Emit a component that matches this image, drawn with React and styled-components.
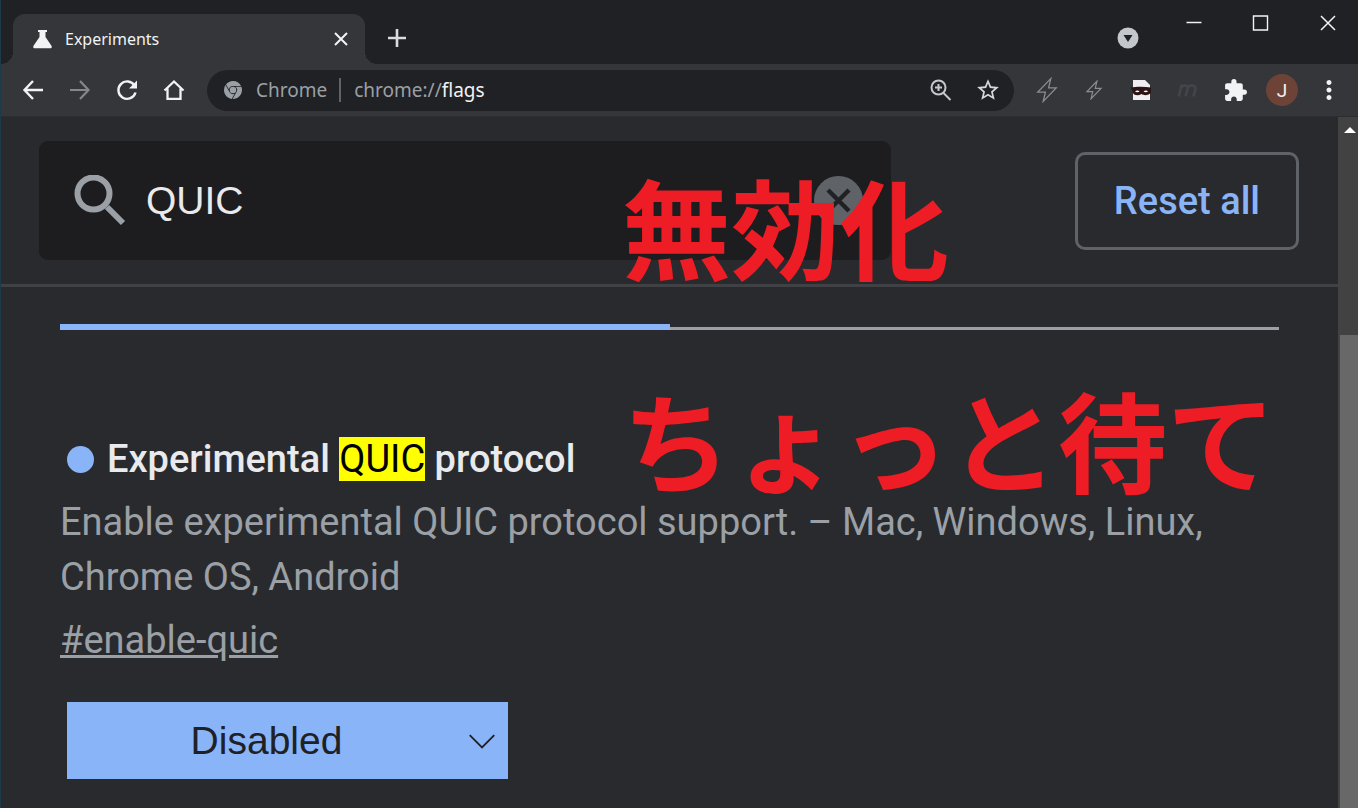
import React from 'react'
import styled, { createGlobalStyle } from 'styled-components'
import { MdExtension, MdMoreVert, MdStarBorder } from 'react-icons/md'
import { SiGooglechrome } from 'react-icons/si'

const GlobalStyle = createGlobalStyle`
    * {
        box-sizing: border-box;
    }
    body {
        margin: 0;
        background: #292a2d;
        font-family: Roboto, sans-serif;
    }
    button {
        font-family: inherit;
        cursor: pointer;
    }
`

const Window = styled.div`
    position: relative;
    display: flex;
    flex-direction: column;
    min-height: 100vh;
    overflow: hidden;
    border-left: 1px solid #1d3a47;
`

const TabStrip = styled.div`
    display: flex;
    height: 64px;
    padding-left: 12px;
    background: #202124;
`

const Tab = styled.div`
    position: relative;
    display: flex;
    align-items: center;
    width: 352px;
    height: 50px;
    margin-top: 14px;
    padding: 0 12px 0 20px;
    border-radius: 12px 12px 0 0;
    background: #35363a;
    color: #f1f3f4;

    &::before,
    &::after {
        content: '';
        position: absolute;
        bottom: 0;
        width: 12px;
        height: 12px;
    }
    &::before {
        right: 100%;
        background: radial-gradient(circle at 0 0, transparent 12px, #35363a 12px);
    }
    &::after {
        left: 100%;
        background: radial-gradient(circle at 100% 0, transparent 12px, #35363a 12px);
    }
`

const TabTitle = styled.span`
    flex: 1;
    margin-left: 13px;
    font: 16px 'Noto Sans', sans-serif;
`

const IconButton = styled.button`
    display: flex;
    flex: none;
    align-items: center;
    justify-content: center;
    width: ${props => props.$width || 42}px;
    height: ${props => props.$height || 42}px;
    padding: 0;
    border: 0;
    background: none;
    color: ${props => props.$color || '#f1f3f4'};
`

const NewTab = styled(IconButton)`
    margin: 17px auto 0 11px;
`

const TabSearch = styled(IconButton)`
    margin: 17px 15px 0 0;
`

const WindowControls = styled.div`
    display: flex;
    gap: 7px;
`

const Toolbar = styled.div`
    display: flex;
    align-items: center;
    gap: 12px;
    height: 53px;
    padding: 0 8px 0 11px;
    background: #35363a;
    border-bottom: 1px solid #2c2d30;
`

const ButtonGroup = styled.div`
    display: flex;
    align-items: center;
    gap: 5px;
`

const Omnibox = styled.div`
    display: flex;
    flex: 1;
    align-items: center;
    height: 41px;
    padding: 0 5px 0 17px;
    border-radius: 21px;
    background: #202124;
    color: #9aa0a6;
    font: 19px 'Noto Sans', sans-serif;
`

const SiteName = styled.span`
    margin-left: 14px;
    padding-right: 12px;
    border-right: 2px solid #5f6368;
    line-height: 24px;
`

const Address = styled.span`
    flex: 1;
    margin-left: 13px;

    b {
        color: #f1f3f4;
        font-weight: 400;
    }
`

const Avatar = styled.span`
    display: flex;
    align-items: center;
    justify-content: center;
    width: 32px;
    height: 32px;
    border-radius: 50%;
    background: #6d4338;
    font: 19px Roboto, sans-serif;
`

const Viewport = styled.div`
    display: flex;
    flex: 1;
`

const Page = styled.main`
    flex: 1;
    min-width: 0;
`

const Header = styled.header`
    display: flex;
    align-items: center;
    justify-content: space-between;
    gap: 40px;
    height: 170px;
    padding: 0 39px 0 38px;
    border-bottom: 3px solid #3f4145;
`

const SearchBox = styled.div`
    display: flex;
    align-items: center;
    flex: 0 1 852px;
    min-width: 0;
    height: 119px;
    padding: 0 28px 0 35px;
    border-radius: 9px;
    background: #1d1d1f;
`

const SearchInput = styled.input`
    flex: 1;
    min-width: 0;
    margin-left: 20px;
    padding: 0;
    border: 0;
    outline: 0;
    background: none;
    color: #e8eaed;
    font: 39px 'Liberation Sans', sans-serif;
`

const ResetButton = styled.button`
    flex: none;
    height: 98px;
    padding: 0 36px;
    border: 3px solid #5f6368;
    border-radius: 10px;
    background: none;
    color: #8ab4f8;
    font-size: 38px;
    font-weight: 500;
`

const Tabs = styled.div`
    display: flex;
    height: 6px;
    margin: 37px 59px 0;
`

const TabLine = styled.div`
    flex: 1;
    border-bottom: ${props => (props.$selected ? '6px solid #8ab4f8' : '3px solid #9aa0a6')};
`

const Experiment = styled.section`
    padding: 102px 59px 28px;
    color: #9aa0a6;
    font-size: 38px;
    line-height: 55px;
`

const Name = styled.h2`
    display: flex;
    align-items: center;
    margin: 0 0 8px;
    padding-left: 7px;
    color: #e8eaed;
    font-size: 38px;
    font-weight: 500;
    line-height: 55px;
`

const Dot = styled.span`
    width: 27px;
    height: 27px;
    margin-right: 13px;
    border-radius: 50%;
    background: #8ab4f8;
`

const Mark = styled.mark`
    background: #ff0;
    color: #000;
    font-weight: 400;
`

const Description = styled.p`
    margin: 0;
`

const Permalink = styled.a`
    display: inline-block;
    margin-top: 8px;
    color: inherit;
`

const SelectWrap = styled.div`
    display: grid;
    align-items: center;
    width: 441px;
    max-width: 100%;
    margin: 34px 0 0 7px;
    color: #202124;

    > * {
        grid-area: 1 / 1;
    }
    svg {
        justify-self: end;
        margin-right: 12px;
        pointer-events: none;
    }
`

const Select = styled.select`
    appearance: none;
    width: 100%;
    height: 77px;
    padding: 0 42px 0 0;
    border: 0;
    border-radius: 0;
    background: #8ab4f8;
    color: inherit;
    font: 39px 'Liberation Sans', sans-serif;
    text-align: center;
    text-align-last: center;
`

const Scrollbar = styled.div`
    flex: none;
    width: 20px;
    padding-top: 10px;
    background: #424242;
`

const ScrollArrow = styled.div`
    width: 12px;
    height: 6px;
    margin: 0 auto 202px 6px;
    background: #fff;
    clip-path: polygon(50% 0, 100% 100%, 0 100%);
`

const ScrollThumb = styled.div`
    height: calc(100% - 208px);
    margin-left: 2px;
    background: #686868;
`

const Caption = styled.div`
    position: absolute;
    top: ${props => props.$top}px;
    left: 621px;
    color: #ee1c25;
    font: 700 109px/1 'Noto Sans CJK JP', sans-serif;
    white-space: nowrap;
    pointer-events: none;
`

const Line = ({ size = 24, width = 2, d, children }) => (
    <svg width={size} height={size} viewBox="0 0 24 24" fill="none" stroke="currentColor" strokeWidth={width} aria-hidden="true">
        <path d={d} />
        {children}
    </svg>
)

const Flask = () => (
    <svg width="19" height="19" viewBox="0 0 19 19" fill="currentColor" aria-hidden="true">
        <path d="M5 0h9v2h-1.500v5l5.800 8.500c1 1.600.4 2.800-1.300 2.800H2c-1.700 0-2.300-1.200-1.300-2.800L6.500 7V2H5z" />
    </svg>
)

const MaskFace = () => (
    <svg width="24" height="24" viewBox="0 0 24 24" aria-hidden="true">
        <path d="M4 2h12l5 5v15H4z" fill="#f1ecef" />
        <path d="M1.500 9.500c6-1 14-1 20.500 0v5c-2 3-7 3.500-9.500 1.500C9.500 18 5 17.500 4 15l-1-3z" fill="#2a1416" />
        <path d="M6 13.500c1.500-1.500 3.500-1.500 4.500 0-1.500 1-3 1-4.500 0zM14.500 13.500c1.500-1.500 3.500-1.500 4.500 0-1.500 1-3 1-4.500 0z" fill="#fff" />
    </svg>
)

const BOLT = 'M15.500 1.500 3.500 14h7L8.500 22.500 20.500 10h-7z'

const App = () => {
    return (
        <Window>
            <GlobalStyle />
            <TabStrip>
                <Tab>
                    <Flask />
                    <TabTitle>Experiments</TabTitle>
                    <IconButton $width={24} $height={24} aria-label="Close tab">
                        <Line d="M6 6l12 12M18 6L6 18" />
                    </IconButton>
                </Tab>
                <NewTab aria-label="New tab" $color="#dadce0">
                    <Line width={2.6} d="M12 3v18M3 12h18" />
                </NewTab>
                <TabSearch aria-label="Search tabs">
                    <svg width="22" height="22" viewBox="0 0 22 22" aria-hidden="true">
                        <circle cx="11" cy="11" r="10.500" fill="#c4c7cc" />
                        <path d="M6.500 8h9L11 15z" fill="#202124" />
                    </svg>
                </TabSearch>
                <WindowControls>
                    <IconButton $width={60} $height={45} aria-label="Minimize">
                        <Line width={1.5} d="M4.500 11.500h15" />
                    </IconButton>
                    <IconButton $width={60} $height={45} aria-label="Maximize">
                        <Line width={1.4} d="M4.500 5h14v14h-14z" />
                    </IconButton>
                    <IconButton $width={60} $height={45} aria-label="Close">
                        <Line width={1.5} d="M5 5l14 14M19 5l-14 14" />
                    </IconButton>
                </WindowControls>
            </TabStrip>

            <Toolbar>
                <ButtonGroup>
                    <IconButton aria-label="Back">
                        <Line width={2.4} d="M22 12H4M12 3L3.500 12l8.500 9" />
                    </IconButton>
                    <IconButton aria-label="Forward" $color="#85878a">
                        <Line width={2.2} d="M2 12h18M12 3l8.500 9-8.500 9" />
                    </IconButton>
                    <IconButton aria-label="Reload">
                        <Line width={2.4} d="M19.500 7.500A8.700 8.700 0 1 0 20.500 14.500">
                            <path d="M22 2.500v8h-8z" fill="currentColor" stroke="none" />
                        </Line>
                    </IconButton>
                    <IconButton aria-label="Home">
                        <Line width={2.3} d="M2.500 12.500L12 3.500l9.500 9M5.500 10.500v10.300h13V10.500" />
                    </IconButton>
                </ButtonGroup>
                <Omnibox>
                    <SiGooglechrome size={18} />
                    <SiteName>Chrome</SiteName>
                    <Address>
                        chrome://<b>flags</b>
                    </Address>
                    <ButtonGroup>
                        <IconButton aria-label="Zoom" $color="#c4c7cc">
                            <Line d="M14.500 15L21.500 22M9.500 6v7M6 9.500h7">
                                <circle cx="9.500" cy="9.500" r="7" />
                            </Line>
                        </IconButton>
                        <IconButton aria-label="Bookmark this page" $color="#d5d7da">
                            <MdStarBorder size={26} />
                        </IconButton>
                    </ButtonGroup>
                </Omnibox>
                <ButtonGroup>
                    <IconButton aria-label="Extension" $color="#8b8d90">
                        <Line size={26} width={1.2} d={BOLT} />
                    </IconButton>
                    <IconButton aria-label="Extension" $color="#8b8d90">
                        <Line size={20} width={1.4} d={BOLT} />
                    </IconButton>
                    <IconButton aria-label="Extension">
                        <MaskFace />
                    </IconButton>
                    <IconButton aria-label="Extension" $color="#44454a">
                        <Line width={2.8} d="M2 19L5 6M4.500 10c2-4 8-4 7 1l-2 8M11 10c2-4 10-4 9 1l-2 8" size={22} />
                    </IconButton>
                    <IconButton aria-label="Extensions">
                        <MdExtension size={25} />
                    </IconButton>
                    <IconButton aria-label="Profile">
                        <Avatar>J</Avatar>
                    </IconButton>
                    <IconButton aria-label="Menu">
                        <MdMoreVert size={30} />
                    </IconButton>
                </ButtonGroup>
            </Toolbar>

            <Viewport>
                <Page>
                    <Header>
                        <SearchBox>
                            <svg width="52" height="52" viewBox="0 0 52 52" fill="none" stroke="#9aa0a6" strokeWidth="6" aria-hidden="true">
                                <circle cx="19.500" cy="18.500" r="16" />
                                <path d="M33 32L49 48" />
                            </svg>
                            <SearchInput type="text" aria-label="Search flags" defaultValue="QUIC" />
                            <IconButton $width={49} $height={49} aria-label="Clear search">
                                <svg width="49" height="49" viewBox="0 0 49 49" aria-hidden="true">
                                    <circle cx="24.500" cy="24.500" r="24.500" fill="#5f6368" />
                                    <path d="M14 14l21 21M35 14L14 35" stroke="#202124" strokeWidth="4.500" />
                                </svg>
                            </IconButton>
                        </SearchBox>
                        <ResetButton>Reset all</ResetButton>
                    </Header>
                    <Tabs>
                        <TabLine $selected />
                        <TabLine />
                    </Tabs>
                    <Experiment>
                        <Name>
                            <Dot />
                            <span>
                                Experimental <Mark>QUIC</Mark> protocol
                            </span>
                        </Name>
                        <Description>
                            Enable experimental QUIC protocol support. – Mac, Windows, Linux, Chrome OS, Android
                        </Description>
                        <Permalink href="#enable-quic">#enable-quic</Permalink>
                        <SelectWrap>
                            <Select aria-label="Experimental QUIC protocol" defaultValue="Disabled">
                                <option>Default</option>
                                <option>Enabled</option>
                                <option>Disabled</option>
                            </Select>
                            <Line size={28} width={1.6} d="M1.500 7L12 17.500 22.500 7" />
                        </SelectWrap>
                    </Experiment>
                </Page>
                <Scrollbar>
                    <ScrollArrow />
                    <ScrollThumb />
                </Scrollbar>
            </Viewport>

            <Caption $top={170}>無効化</Caption>
            <Caption $top={383}>ちょっと待て</Caption>
        </Window>
    )
}

export default App
